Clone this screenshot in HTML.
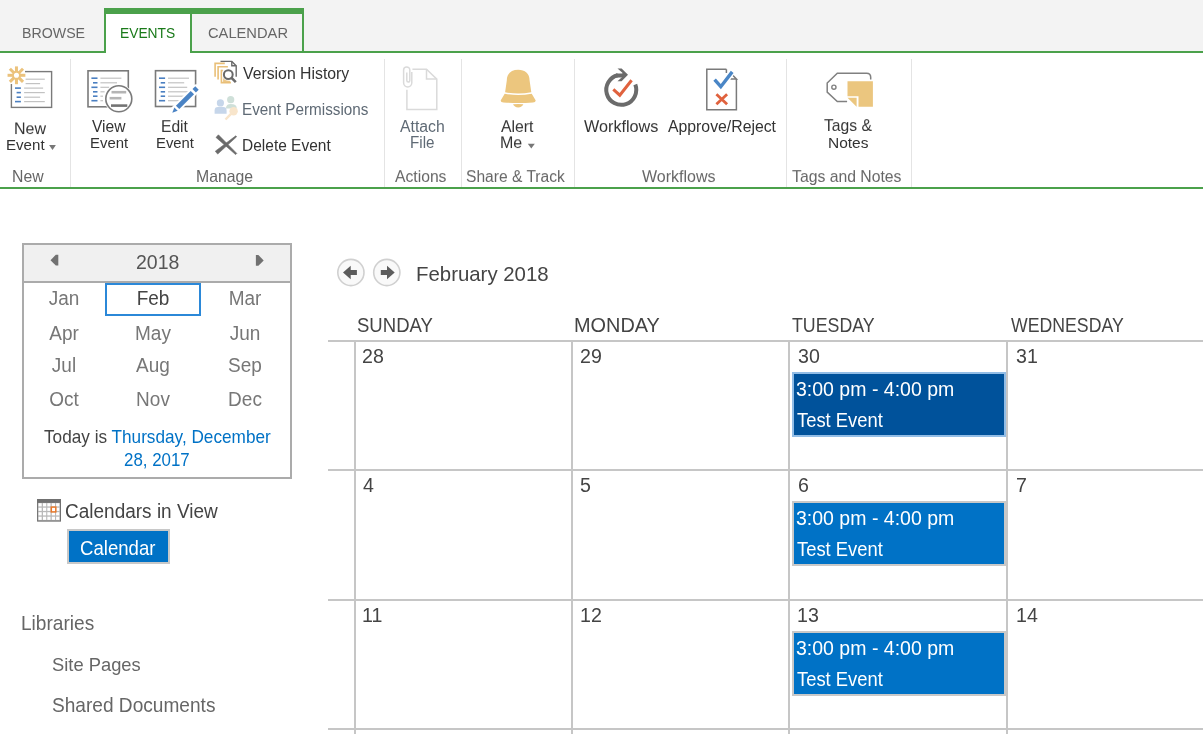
<!DOCTYPE html>
<html><head><meta charset="utf-8"><style>
html,body{margin:0;padding:0;}
body{width:1203px;height:734px;overflow:hidden;position:relative;background:#fff;font-family:"Liberation Sans",sans-serif;}
.t{position:absolute;white-space:nowrap;line-height:1;will-change:transform;}
.tc{position:absolute;white-space:nowrap;line-height:1;width:100px;text-align:center;will-change:transform;}
</style></head><body>
<div style="position:absolute;left:0px;top:0px;width:1203px;height:51px;background:#f3f3f3"></div>
<div style="position:absolute;left:0px;top:51px;width:1203px;height:2px;background:#4ba14b"></div>
<div style="position:absolute;left:104px;top:8px;width:200px;height:6px;background:#4ba14b"></div>
<div style="position:absolute;left:104px;top:14px;width:2px;height:39px;background:#4ba14b"></div>
<div style="position:absolute;left:106px;top:14px;width:84px;height:39px;background:#fff"></div>
<div style="position:absolute;left:190px;top:14px;width:2px;height:39px;background:#4ba14b"></div>
<div style="position:absolute;left:302px;top:14px;width:2px;height:39px;background:#4ba14b"></div>
<div style="position:absolute;left:0px;top:187px;width:1203px;height:2px;background:#4ba14b"></div>
<div style="position:absolute;left:70px;top:59px;width:1px;height:128px;background:#e4e4e4"></div>
<div style="position:absolute;left:384px;top:59px;width:1px;height:128px;background:#e4e4e4"></div>
<div style="position:absolute;left:461px;top:59px;width:1px;height:128px;background:#e4e4e4"></div>
<div style="position:absolute;left:574px;top:59px;width:1px;height:128px;background:#e4e4e4"></div>
<div style="position:absolute;left:786px;top:59px;width:1px;height:128px;background:#e4e4e4"></div>
<div style="position:absolute;left:911px;top:59px;width:1px;height:128px;background:#e4e4e4"></div>
<div style="position:absolute;left:22px;top:243px;width:270px;height:236px;box-sizing:border-box;border:2px solid #ababab;background:#fff"></div>
<div style="position:absolute;left:24px;top:245px;width:266px;height:36px;background:#f0f0f0"></div>
<div style="position:absolute;left:24px;top:281px;width:266px;height:2px;background:#ababab"></div>
<div style="position:absolute;left:105px;top:283px;width:96px;height:33px;box-sizing:border-box;border:2px solid #2b88d8"></div>
<div class="tc" style="left:14.200000000000003px;top:288.92px;font-size:19px;color:#777;transform:scaleY(1.02);transform-origin:0 16.08px">Jan</div>
<div class="tc" style="left:103.19999999999999px;top:288.92px;font-size:19px;color:#444;transform:scaleY(1.02);transform-origin:0 16.08px">Feb</div>
<div class="tc" style="left:195.2px;top:288.92px;font-size:19px;color:#777;transform:scaleY(1.02);transform-origin:0 16.08px">Mar</div>
<div class="tc" style="left:14.200000000000003px;top:323.52px;font-size:19px;color:#777;transform:scaleY(1.02);transform-origin:0 16.08px">Apr</div>
<div class="tc" style="left:103.19999999999999px;top:323.52px;font-size:19px;color:#777;transform:scaleY(1.02);transform-origin:0 16.08px">May</div>
<div class="tc" style="left:195.2px;top:323.52px;font-size:19px;color:#777;transform:scaleY(1.02);transform-origin:0 16.08px">Jun</div>
<div class="tc" style="left:14.200000000000003px;top:356.22px;font-size:19px;color:#777;transform:scaleY(1.02);transform-origin:0 16.08px">Jul</div>
<div class="tc" style="left:103.19999999999999px;top:356.22px;font-size:19px;color:#777;transform:scaleY(1.02);transform-origin:0 16.08px">Aug</div>
<div class="tc" style="left:195.2px;top:356.22px;font-size:19px;color:#777;transform:scaleY(1.02);transform-origin:0 16.08px">Sep</div>
<div class="tc" style="left:14.200000000000003px;top:389.92px;font-size:19px;color:#777;transform:scaleY(1.02);transform-origin:0 16.08px">Oct</div>
<div class="tc" style="left:103.19999999999999px;top:389.92px;font-size:19px;color:#777;transform:scaleY(1.02);transform-origin:0 16.08px">Nov</div>
<div class="tc" style="left:195.2px;top:389.92px;font-size:19px;color:#777;transform:scaleY(1.02);transform-origin:0 16.08px">Dec</div>
<div style="position:absolute;left:67px;top:529px;width:103px;height:35px;box-sizing:border-box;border:2px solid #c8c8c8;background:#0072c6"></div>
<div style="position:absolute;left:328px;top:340px;width:875px;height:2px;background:#c6c6c6"></div>
<div style="position:absolute;left:328px;top:469px;width:875px;height:2px;background:#c6c6c6"></div>
<div style="position:absolute;left:328px;top:599px;width:875px;height:2px;background:#c6c6c6"></div>
<div style="position:absolute;left:328px;top:728px;width:875px;height:2px;background:#c6c6c6"></div>
<div style="position:absolute;left:354px;top:342px;width:2px;height:392px;background:#c6c6c6"></div>
<div style="position:absolute;left:571px;top:342px;width:2px;height:392px;background:#c6c6c6"></div>
<div style="position:absolute;left:788px;top:342px;width:2px;height:392px;background:#c6c6c6"></div>
<div style="position:absolute;left:1006px;top:342px;width:2px;height:392px;background:#c6c6c6"></div>
<div style="position:absolute;left:792px;top:372px;width:214px;height:65px;box-sizing:border-box;border:2px solid #92bde6;background:#00529b"></div>
<div style="position:absolute;left:792px;top:501px;width:214px;height:65px;box-sizing:border-box;border:2px solid #c8c8c8;background:#0072c6"></div>
<div style="position:absolute;left:792px;top:631px;width:214px;height:65px;box-sizing:border-box;border:2px solid #c8c8c8;background:#0072c6"></div>

<svg width="1203" height="734" viewBox="0 0 1203 734" style="position:absolute;left:0;top:0">
<!-- New Event icon -->
<g>
 <rect x="11.4" y="71.6" width="40.2" height="35.8" fill="none" stroke="#7a7a7a" stroke-width="1.4"/>
 <rect x="8" y="67" width="17" height="17" fill="#fff"/>
 <g stroke="#c2c2c2" stroke-width="1.2">
  <line x1="25.6" y1="79.2" x2="44.8" y2="79.2"/><line x1="25.6" y1="83.6" x2="40.1" y2="83.6"/>
  <line x1="24.1" y1="88.1" x2="43.1" y2="88.1"/><line x1="24.1" y1="92.6" x2="44.8" y2="92.6"/>
  <line x1="24.1" y1="97.2" x2="40.1" y2="97.2"/><line x1="24.1" y1="101.6" x2="44.8" y2="101.6"/>
 </g>
 <g stroke="#4a7fc1" stroke-width="1.6">
  <line x1="15" y1="88.1" x2="20.9" y2="88.1"/><line x1="16.6" y1="92.6" x2="20.9" y2="92.6"/>
  <line x1="16.6" y1="97.2" x2="20.9" y2="97.2"/><line x1="15" y1="101.6" x2="20.9" y2="101.6"/>
 </g>
 <g stroke="#ebc27c" stroke-width="3.0"><line x1="20.05" y1="75.30" x2="25.35" y2="75.30"/><line x1="19.00" y1="77.85" x2="23.03" y2="81.88"/><line x1="16.45" y1="78.90" x2="16.45" y2="84.20"/><line x1="13.90" y1="77.85" x2="9.87" y2="81.88"/><line x1="12.85" y1="75.30" x2="7.55" y2="75.30"/><line x1="13.90" y1="72.75" x2="9.87" y2="68.72"/><line x1="16.45" y1="71.70" x2="16.45" y2="66.40"/><line x1="19.00" y1="72.75" x2="23.03" y2="68.72"/></g>
 <circle cx="16.45" cy="75.3" r="3.5" fill="#fff" stroke="#ebc27c" stroke-width="1.9"/>
</g>
<!-- View Event icon -->
<g>
 <rect x="88" y="70.8" width="40.3" height="36" fill="none" stroke="#7a7a7a" stroke-width="1.6"/>
 <g stroke="#c2c2c2" stroke-width="1.2">
  <line x1="100.4" y1="78.2" x2="121.4" y2="78.2"/><line x1="100.4" y1="82.8" x2="117" y2="82.8"/>
  <line x1="100.4" y1="87.3" x2="109.2" y2="87.3"/><line x1="100.4" y1="91.8" x2="104.6" y2="91.8"/>
  <line x1="100.4" y1="96.2" x2="103" y2="96.2"/><line x1="100.4" y1="100.7" x2="103" y2="100.7"/>
 </g>
 <g stroke="#4a7fc1" stroke-width="1.6">
  <line x1="91.4" y1="78.2" x2="97.5" y2="78.2"/><line x1="93" y1="82.8" x2="97.5" y2="82.8"/>
  <line x1="91.4" y1="87.3" x2="97.5" y2="87.3"/><line x1="93" y1="91.8" x2="97.5" y2="91.8"/>
  <line x1="93" y1="96.2" x2="97.5" y2="96.2"/><line x1="91.4" y1="100.7" x2="97.5" y2="100.7"/>
 </g>
 <circle cx="118.8" cy="98.8" r="14.5" fill="#fff"/>
 <circle cx="118.8" cy="98.8" r="13" fill="#fff" stroke="#7a7a7a" stroke-width="1.6"/>
 <g stroke-width="2.6">
  <line x1="111.5" y1="92.2" x2="126.2" y2="92.2" stroke="#b4b4b4"/>
  <line x1="109.6" y1="98.2" x2="121.4" y2="98.2" stroke="#b4b4b4"/>
  <line x1="111" y1="105.6" x2="127.3" y2="105.6" stroke="#737373"/>
 </g>
</g>
<!-- Edit Event icon -->
<g>
 <rect x="155.5" y="70.7" width="40.1" height="35.8" fill="none" stroke="#7a7a7a" stroke-width="1.6"/>
 <g stroke="#c2c2c2" stroke-width="1.2">
  <line x1="168" y1="78.2" x2="189" y2="78.2"/><line x1="168" y1="82.8" x2="184.2" y2="82.8"/>
  <line x1="168" y1="87.3" x2="187.2" y2="87.3"/><line x1="168" y1="91.8" x2="189" y2="91.8"/>
  <line x1="168" y1="96.2" x2="184.2" y2="96.2"/><line x1="168" y1="100.7" x2="179.4" y2="100.7"/>
 </g>
 <g stroke="#4a7fc1" stroke-width="1.6">
  <line x1="159" y1="78.2" x2="165.1" y2="78.2"/><line x1="160.7" y1="82.8" x2="165.1" y2="82.8"/>
  <line x1="159" y1="87.3" x2="165.1" y2="87.3"/><line x1="160.7" y1="91.8" x2="165.1" y2="91.8"/>
  <line x1="160.7" y1="96.2" x2="165.1" y2="96.2"/><line x1="159" y1="100.7" x2="165.1" y2="100.7"/>
 </g>
 <g stroke="#fff" stroke-width="8.5" stroke-linecap="round"><line x1="174" y1="111" x2="196.5" y2="88.5"/></g>
 <line x1="177.6" y1="107.4" x2="192.4" y2="92.6" stroke="#4a83c4" stroke-width="4.8"/>
 <line x1="194.2" y1="90.8" x2="197" y2="88" stroke="#4a83c4" stroke-width="4.8" stroke-linejoin="round"/>
 <polygon points="172.3,112.8 174.3,107.4 177.7,110.8" fill="#4a83c4"/>
</g>
<!-- Version history icon -->
<g fill="none">
 <path d="M220.5 61.4 H231.8 L236.2 65.8 V76.7" stroke="#6a6a6a" stroke-width="1.4"/>
 <path d="M231.8 61.4 V65.8 H236.2" stroke="#6a6a6a" stroke-width="1.4"/>
 <path d="M215.1 76.7 V63.4 H224.8" stroke="#e9bf78" stroke-width="1.6"/>
 <path d="M218.1 79.6 V66.7 H227.9" stroke="#e9bf78" stroke-width="1.6"/>
 <path d="M221.4 69.8 H223.1 V82.6 H230.9 L221.4 69.8 Z" fill="#ecc788" stroke="none"/>
 <path d="M221.4 69.8 V82.6 H230.9" stroke="#e9bf78" stroke-width="1.6"/>
 <circle cx="228.3" cy="74.6" r="6.2" fill="#fff" stroke="none"/>
 <circle cx="228.3" cy="74.6" r="4.4" stroke="#6a6a6a" stroke-width="2"/>
 <line x1="231.5" y1="77.8" x2="235.8" y2="82.1" stroke="#6a6a6a" stroke-width="2.6"/>
</g>
<!-- Event permissions icon -->
<g>
 <circle cx="230.7" cy="99.7" r="3.6" fill="#cfe0d9"/>
 <path d="M225.9 108.4 Q226 104 230.7 104 Q236.8 104 236.8 108.4 Z" fill="#cfe0d9"/>
 <circle cx="220.4" cy="102.9" r="3.6" fill="#c6d6ea"/>
 <path d="M214.6 113.8 V110.5 Q214.6 107.1 218 107.1 H223.2 Q226.6 107.1 226.6 110.5 V113.8 Z" fill="#c6d6ea"/>
 <circle cx="233.6" cy="111.2" r="4.2" fill="#f8e5cb"/>
 <line x1="231" y1="113.8" x2="225.5" y2="119.5" stroke="#f8e5cb" stroke-width="2.4"/>
</g>
<!-- Delete X -->
<g fill="#6a6a6a">
 <polygon points="216.0,137.4 218.4,134.8 236.8,153.4 235.6,154.6" stroke="#6a6a6a" stroke-width="0.6" stroke-linejoin="round"/>
 <polygon points="215.3,151.2 217.7,154.1 236.6,136.8 235.8,135.8" stroke="#6a6a6a" stroke-width="0.6" stroke-linejoin="round"/>
</g>
<!-- Attach file -->
<g fill="none" stroke="#dadada" stroke-width="1.5">
 <path d="M406.9 89.8 V109.6 H436.8 V79.1 L426.5 69.2 H412.4"/>
 <path d="M426.5 69.2 V79.1 H436.8"/>
 <path d="M411.8 72 V82.8 A4.1 4.1 0 0 1 403.6 82.8 V70 A3.1 3.1 0 0 1 409.8 70 V80.6 A1.5 1.5 0 0 1 406.8 80.6 V72.5"/>
</g>
<!-- Bell -->
<g fill="#ecc67e">
 <path d="M506.8 80.5 C506.8 73.5 511.5 69.8 518.2 69.8 C524.9 69.8 529.6 73.5 529.6 80.5 L531.3 92.2 Q518.2 94.6 505.1 92.2 Z"/>
 <path d="M504.7 93.8 Q518.2 96.2 531.7 93.8 L535.6 100.2 Q536 102.2 533 102.4 Q518.2 103.6 503.4 102.4 Q500.4 102.2 500.8 100.2 Z"/>
 <path d="M513 104.3 Q518.2 103.9 523.4 104.3 Q522 107.4 518.2 107.4 Q514.4 107.4 513 104.3 Z"/>
</g>
<!-- Workflows -->
<g fill="none">
 <path d="M635.3 84.5 A15 15 0 1 1 617.8 75.2" stroke="#6b6b6b" stroke-width="4"/>
 <path d="M616 75.5 H624" stroke="#6b6b6b" stroke-width="4"/>
 <polygon points="617.5,68.6 621.6,68.6 628,74.8 621.6,81.2 617.5,81.2 622.4,76.8 622.4,72.8" fill="#6b6b6b"/>
 <polyline points="613.3,89.4 619.8,95.2 631.6,80.2" stroke="#e0623e" stroke-width="3"/>
</g>
<!-- Approve/Reject -->
<g fill="none">
 <path d="M726.4 69.2 H706.8 V109.7 H736.4 V78.9" stroke="#7a7a7a" stroke-width="1.5"/>
 <path d="M726.4 69.2 V73 M730.4 78.9 H736.4 L732 74.5" stroke="#7a7a7a" stroke-width="1.5"/>
 <polyline points="714.6,79.7 720.8,86.7 732.2,71.9" stroke="#fff" stroke-width="6"/>
 <polyline points="714.6,79.7 720.8,86.7 732.2,71.9" stroke="#4a86c6" stroke-width="3.4"/>
 <path d="M716.4 94.2 L727.1 104.2 M727.1 94.2 L716.4 104.2" stroke="#e0623e" stroke-width="2.8"/>
</g>
<!-- Tags & notes -->
<g>
 <path d="M847.1 101.6 H837.3 L827.2 92.1 V83 L837.3 73.2 H866.6 Q870.7 73.2 870.7 77.3 V79.4" fill="none" stroke="#808080" stroke-width="1.5"/>
 <circle cx="833.9" cy="87.2" r="2.1" fill="none" stroke="#808080" stroke-width="1.4"/>
 <path d="M847.5 81.3 H872.9 V106.8 H858.5 V96.2 H847.5 Z" fill="#ebc67f"/>
 <path d="M847.5 97.8 H856.6 V106.8 Z" fill="#ebc67f"/>
</g>
<!-- dropdown arrows -->
<polygon points="49.1,145 55.9,145 52.5,149.9" fill="#777"/>
<polygon points="527.8,143.8 534.8,143.8 531.3,148.6" fill="#777"/>
<!-- date picker arrows -->
<polygon points="50.5,260.2 55.8,254.8 58.3,254.8 58.3,265.4 55.8,265.4" fill="#717171"/>
<polygon points="263.7,260.4 258.4,255 255.9,255 255.9,265.7 258.4,265.7" fill="#717171"/>
<!-- nav circles -->
<g>
 <circle cx="350.9" cy="272.5" r="13.1" fill="#f9f9f9" stroke="#d0d0d0" stroke-width="1.6"/>
 <polygon points="343,272.4 350.7,265.7 350.7,269.9 356.9,269.9 356.9,275 350.7,275 350.7,279.2" fill="#5c5c5c"/>
 <circle cx="386.8" cy="272.5" r="13.1" fill="#f9f9f9" stroke="#d0d0d0" stroke-width="1.6"/>
 <polygon points="394.7,272.4 387,265.7 387,269.9 380.8,269.9 380.8,275 387,275 387,279.2" fill="#5c5c5c"/>
</g>
<!-- calendars in view icon -->
<g>
 <rect x="37.1" y="499.1" width="23.9" height="22.4" fill="#b9b9b9"/>
 <rect x="37.1" y="499.1" width="23.9" height="3.8" fill="#707070"/>
 <rect x="37.6" y="499.6" width="22.9" height="21.4" fill="none" stroke="#707070" stroke-width="1"/>
 <g fill="#fff">
  <rect x="38.5" y="503.2" width="3.2" height="3.2"/><rect x="38.5" y="507.7" width="3.2" height="3.2"/><rect x="38.5" y="512.2" width="3.2" height="3.2"/><rect x="38.5" y="516.7" width="3.2" height="3.2"/><rect x="43.0" y="503.2" width="3.2" height="3.2"/><rect x="43.0" y="507.7" width="3.2" height="3.2"/><rect x="43.0" y="512.2" width="3.2" height="3.2"/><rect x="43.0" y="516.7" width="3.2" height="3.2"/><rect x="47.3" y="503.2" width="3.2" height="3.2"/><rect x="47.3" y="507.7" width="3.2" height="3.2"/><rect x="47.3" y="512.2" width="3.2" height="3.2"/><rect x="47.3" y="516.7" width="3.2" height="3.2"/><rect x="51.8" y="503.2" width="3.2" height="3.2"/><rect x="51.8" y="507.7" width="3.2" height="3.2"/><rect x="51.8" y="512.2" width="3.2" height="3.2"/><rect x="51.8" y="516.7" width="3.2" height="3.2"/><rect x="56.1" y="503.2" width="3.2" height="3.2"/><rect x="56.1" y="507.7" width="3.2" height="3.2"/><rect x="56.1" y="512.2" width="3.2" height="3.2"/><rect x="56.1" y="516.7" width="3.2" height="3.2"/>
 </g>
 <rect x="51.3" y="507.1" width="4.5" height="4.8" fill="#fff" stroke="#e8782a" stroke-width="1.5"/>
</g>
</svg>

<div class="t" style="left:21.74px;top:26.28px;font-size:14.2px;color:#666;transform:scaleY(1.09);transform-origin:0 12.02px;">BROWSE</div>
<div class="t" style="left:120.07px;top:26.62px;font-size:13.8px;color:#1a7a1a;transform:scaleY(1.107);transform-origin:0 11.68px;">EVENTS</div>
<div class="t" style="left:207.95px;top:25.86px;font-size:14.7px;color:#666;transform:scaleY(1.041);transform-origin:0 12.44px;">CALENDAR</div>
<div class="t" style="left:14.39px;top:120.86px;font-size:16.0px;color:#333;transform:scaleY(0.963);transform-origin:0 13.54px;">New</div>
<div class="t" style="left:5.76px;top:137.12px;font-size:15.1px;color:#333;transform:scaleY(1.01);transform-origin:0 12.78px;">Event</div>
<div class="t" style="left:92.13px;top:118.99px;font-size:15.6px;color:#333;">View</div>
<div class="t" style="left:89.88px;top:135.79px;font-size:14.9px;color:#333;transform:scaleY(1.022);transform-origin:0 12.61px;">Event</div>
<div class="t" style="left:161.32px;top:118.99px;font-size:15.6px;color:#333;transform:scaleY(0.989);transform-origin:0 13.21px;">Edit</div>
<div class="t" style="left:155.58px;top:135.83px;font-size:14.85px;color:#333;transform:scaleY(1.025);transform-origin:0 12.57px;">Event</div>
<div class="t" style="left:243.13px;top:66.33px;font-size:15.8px;color:#333;">Version History</div>
<div class="t" style="left:242.45px;top:102.17px;font-size:15.27px;color:#5f6a75;transform:scaleY(1.022);transform-origin:0 12.93px;">Event Permissions</div>
<div class="t" style="left:242.43px;top:137.98px;font-size:15.5px;color:#333;transform:scaleY(1.02);transform-origin:0 13.12px;">Delete Event</div>
<div class="t" style="left:12.30px;top:168.73px;font-size:15.8px;color:#666;transform:scaleY(1.004);transform-origin:0 13.37px;">New</div>
<div class="t" style="left:195.90px;top:168.73px;font-size:15.8px;color:#666;transform:scaleY(1.004);transform-origin:0 13.37px;">Manage</div>
<div class="t" style="left:399.97px;top:118.93px;font-size:15.8px;color:#5f6a75;">Attach</div>
<div class="t" style="left:410.25px;top:135.33px;font-size:15.2px;color:#5f6a75;transform:scaleY(1.039);transform-origin:0 12.87px;">File</div>
<div class="t" style="left:394.87px;top:169.21px;font-size:15.7px;color:#666;transform:scaleY(0.987);transform-origin:0 13.29px;">Actions</div>
<div class="t" style="left:500.97px;top:118.93px;font-size:15.8px;color:#333;transform:scaleY(0.981);transform-origin:0 13.37px;">Alert</div>
<div class="t" style="left:499.69px;top:134.66px;font-size:16.0px;color:#333;transform:scaleY(0.969);transform-origin:0 13.54px;">Me</div>
<div class="t" style="left:465.99px;top:169.29px;font-size:15.6px;color:#666;transform:scaleY(0.99);transform-origin:0 13.21px;">Share &amp; Track</div>
<div class="t" style="left:584.43px;top:118.19px;font-size:16.2px;color:#333;transform:scaleY(0.988);transform-origin:0 13.71px;">Workflows</div>
<div class="t" style="left:667.97px;top:119.03px;font-size:15.8px;color:#333;">Approve/Reject</div>
<div class="t" style="left:641.73px;top:168.96px;font-size:16.0px;color:#666;transform:scaleY(0.988);transform-origin:0 13.54px;">Workflows</div>
<div class="t" style="left:824.45px;top:118.41px;font-size:15.7px;color:#333;transform:scaleY(0.987);transform-origin:0 13.29px;">Tags &amp;</div>
<div class="t" style="left:827.93px;top:135.08px;font-size:15.5px;color:#333;">Notes</div>
<div class="t" style="left:792.05px;top:169.17px;font-size:15.75px;color:#666;transform:scaleY(0.99);transform-origin:0 13.33px;">Tags and Notes</div>
<div class="t" style="left:135.62px;top:252.89px;font-size:19.5px;color:#555;transform:scaleY(1.002);transform-origin:0 16.51px;">2018</div>
<div class="t" style="left:43.51px;top:429.14px;font-size:17.2px;color:#444;transform:scaleY(1.08);transform-origin:0 14.56px;">Today is <span style="color:#0072c6">Thursday, December</span></div>
<div class="t" style="left:124.15px;top:453.19px;font-size:16.9px;color:#0072c6;transform:scaleY(1.087);transform-origin:0 14.31px;">28, 2017</div>
<div class="t" style="left:65.24px;top:502.12px;font-size:19.0px;color:#444;transform:scaleY(1.039);transform-origin:0 16.08px;">Calendars in View</div>
<div class="t" style="left:80.26px;top:540.06px;font-size:18.6px;color:#fff;transform:scaleY(1.039);transform-origin:0 15.74px;">Calendar</div>
<div class="t" style="left:21.43px;top:614.13px;font-size:19.1px;color:#666;transform:scaleY(1.012);transform-origin:0 16.17px;">Libraries</div>
<div class="t" style="left:51.57px;top:655.87px;font-size:18.35px;color:#666;transform:scaleY(1.05);transform-origin:0 15.53px;">Site Pages</div>
<div class="t" style="left:51.53px;top:695.93px;font-size:19.1px;color:#666;transform:scaleY(1.025);transform-origin:0 16.17px;">Shared Documents</div>
<div class="t" style="left:415.93px;top:264.03px;font-size:20.4px;color:#444;transform:scaleY(1.015);transform-origin:0 17.27px;">February 2018</div>
<div class="t" style="left:356.86px;top:316.90px;font-size:18.55px;color:#444;transform:scaleY(1.069);transform-origin:0 15.70px;">SUNDAY</div>
<div class="t" style="left:573.87px;top:315.75px;font-size:19.9px;color:#444;transform:scaleY(1.003);transform-origin:0 16.85px;">MONDAY</div>
<div class="t" style="left:792.20px;top:317.53px;font-size:17.8px;color:#444;transform:scaleY(1.105);transform-origin:0 15.07px;">TUESDAY</div>
<div class="t" style="left:1010.72px;top:317.62px;font-size:17.7px;color:#444;transform:scaleY(1.12);transform-origin:0 14.98px;">WEDNESDAY</div>
<div class="t" style="left:362.21px;top:347.11px;font-size:19.6px;color:#444;transform:scaleY(1.02);transform-origin:0 16.59px;">28</div>
<div class="t" style="left:580.01px;top:347.11px;font-size:19.6px;color:#444;transform:scaleY(1.02);transform-origin:0 16.59px;">29</div>
<div class="t" style="left:798.05px;top:347.11px;font-size:19.6px;color:#444;transform:scaleY(1.02);transform-origin:0 16.59px;">30</div>
<div class="t" style="left:1016.25px;top:347.11px;font-size:19.6px;color:#444;transform:scaleY(1.02);transform-origin:0 16.59px;">31</div>
<div class="t" style="left:362.75px;top:476.11px;font-size:19.6px;color:#444;transform:scaleY(1.02);transform-origin:0 16.59px;">4</div>
<div class="t" style="left:580.22px;top:476.11px;font-size:19.6px;color:#444;transform:scaleY(1.02);transform-origin:0 16.59px;">5</div>
<div class="t" style="left:797.80px;top:476.11px;font-size:19.6px;color:#444;transform:scaleY(1.02);transform-origin:0 16.59px;">6</div>
<div class="t" style="left:1016.00px;top:476.11px;font-size:19.6px;color:#444;transform:scaleY(1.02);transform-origin:0 16.59px;">7</div>
<div class="t" style="left:361.71px;top:606.01px;font-size:19.6px;color:#444;transform:scaleY(1.02);transform-origin:0 16.59px;">11</div>
<div class="t" style="left:579.51px;top:606.01px;font-size:19.6px;color:#444;transform:scaleY(1.02);transform-origin:0 16.59px;">12</div>
<div class="t" style="left:797.31px;top:606.01px;font-size:19.6px;color:#444;transform:scaleY(1.02);transform-origin:0 16.59px;">13</div>
<div class="t" style="left:1015.51px;top:606.01px;font-size:19.6px;color:#444;transform:scaleY(1.02);transform-origin:0 16.59px;">14</div>
<div class="t" style="left:795.76px;top:379.79px;font-size:19.5px;color:#fff;transform:scaleY(1.024);transform-origin:0 16.51px;">3:00 pm - 4:00 pm</div>
<div class="t" style="left:796.99px;top:411.72px;font-size:18.4px;color:#fff;transform:scaleY(1.1);transform-origin:0 15.58px;">Test Event</div>
<div class="t" style="left:795.76px;top:508.79px;font-size:19.5px;color:#fff;transform:scaleY(1.024);transform-origin:0 16.51px;">3:00 pm - 4:00 pm</div>
<div class="t" style="left:796.99px;top:540.72px;font-size:18.4px;color:#fff;transform:scaleY(1.1);transform-origin:0 15.58px;">Test Event</div>
<div class="t" style="left:795.76px;top:638.79px;font-size:19.5px;color:#fff;transform:scaleY(1.024);transform-origin:0 16.51px;">3:00 pm - 4:00 pm</div>
<div class="t" style="left:796.99px;top:670.72px;font-size:18.4px;color:#fff;transform:scaleY(1.1);transform-origin:0 15.58px;">Test Event</div>
</body></html>
